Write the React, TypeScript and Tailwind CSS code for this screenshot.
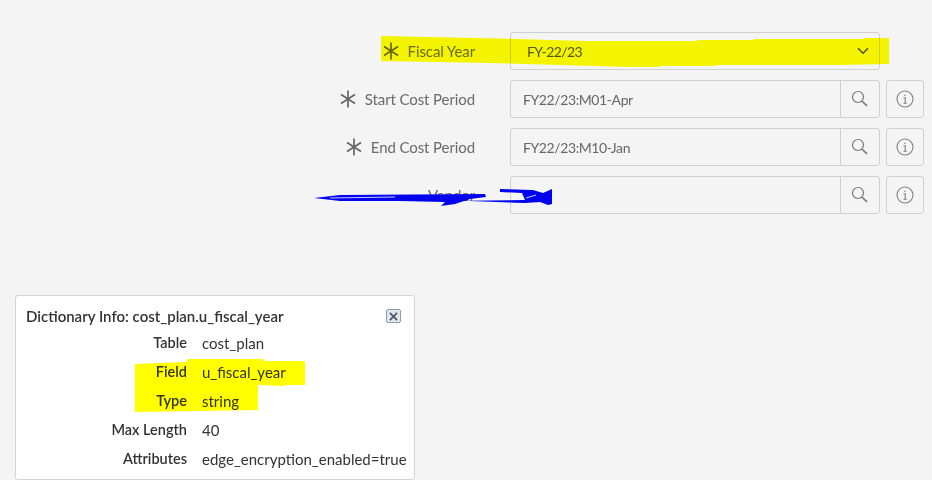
import { ChevronDown } from "lucide-react";

const fields = [
  { label: "Start Cost Period", value: "FY22/23:M01-Apr", required: true },
  { label: "End Cost Period", value: "FY22/23:M10-Jan", required: true },
  { label: "Vendor", value: "", required: false },
];

const dictionary = [
  { name: "Table", value: "cost_plan" },
  { name: "Field", value: "u_fiscal_year" },
  { name: "Type", value: "string" },
  { name: "Max Length", value: "40" },
  { name: "Attributes", value: "edge_encryption_enabled=true" },
];

function RequiredMark() {
  return (
    <svg viewBox="0 0 16 18" className="mr-[9px] h-[18px] w-[16px] text-[#666]" fill="none" stroke="currentColor" strokeWidth="1.7">
      <path d="M8 0.5V17.5M1 4.5L15 13.5M15 4.5L1 13.5" />
    </svg>
  );
}

function SearchIcon() {
  return (
    <svg viewBox="0 0 18 18" className="h-[18px] w-[18px] text-[#777]" fill="none" stroke="currentColor" strokeWidth="1.2">
      <circle cx="7" cy="7" r="5.5" />
      <path d="M10.8 11L16 15.8" strokeWidth="1.7" />
    </svg>
  );
}

function InfoIcon() {
  return (
    <svg viewBox="0 0 18 18" className="h-[18px] w-[18px] text-[#808080]" fill="none" stroke="currentColor" strokeWidth="1.1">
      <circle cx="9" cy="9" r="8" />
      <path d="M7.5 7.8H9.2V13M7.5 13.2H10.8M9 4.4V6" />
    </svg>
  );
}

function Label({ text, required }: { text: string; required: boolean }) {
  return (
    <div className="flex w-[475px] items-center justify-end text-[15px] tracking-[-0.1px] text-[#6b6b6b]">
      {required && <RequiredMark />}
      <span>{text}</span>
    </div>
  );
}

export default function App() {
  return (
    <div className="relative h-[480px] w-[932px] overflow-hidden bg-[#f4f4f4] font-['Lato',sans-serif]">
      <div className="flex flex-col gap-[10px] pt-[32px]">
        <div className="flex h-[38px] items-center">
          <Label text="Fiscal Year" required />
          <div className="ml-[35px] flex h-[38px] w-[370px] items-center justify-between rounded-[3px] border border-[#cfcfcf] pl-[16px] pr-[7px] text-[14px] tracking-[-0.6px] text-[#555]">
            <span>FY-22/23</span>
            <ChevronDown className="h-[18px] w-[18px] text-[#555]" strokeWidth={2.2} />
          </div>
        </div>

        {fields.map((f) => (
          <div key={f.label} className="flex h-[38px] items-center">
            <Label text={f.label} required={f.required} />
            <div className="ml-[35px] flex h-[38px] w-[370px] rounded-[3px] border border-[#cfcfcf]">
              <div className="flex flex-1 items-center pl-[12px] text-[14px] tracking-[-0.4px] text-[#666]">{f.value}</div>
              <div className="flex w-[39px] items-center justify-center border-l border-[#cfcfcf]">
                <SearchIcon />
              </div>
            </div>
            <div className="ml-[6px] flex h-[38px] w-[38px] items-center justify-center rounded-[3px] border border-[#cfcfcf]">
              <InfoIcon />
            </div>
          </div>
        ))}
      </div>

      <div className="absolute left-[15px] top-[295px] h-[185px] w-[400px] rounded-[3px] border border-[#d4d4d4] bg-white text-[#333]">
        <div className="flex items-center justify-between pl-[10px] pr-[13px] pt-[9px]">
          <span className="text-[15px] font-semibold">Dictionary Info: cost_plan.u_fiscal_year</span>
          <span className="flex h-[14px] w-[15px] items-center justify-center rounded-[2px] border border-[#8a9bb0] bg-[#dfe6ec] text-[#556]">
            <svg viewBox="0 0 10 10" className="h-[9px] w-[9px]">
              <path d="M1 1L9 9M9 1L1 9" stroke="currentColor" strokeWidth="2" />
            </svg>
          </span>
        </div>
        <div className="mt-[1px] flex flex-col">
          {dictionary.map((d) => (
            <div key={d.name} className="flex h-[29px] items-center">
              <span className="w-[171px] text-right text-[14.5px] font-semibold">{d.name}</span>
              <span className="ml-[15px] text-[15px]">{d.value}</span>
            </div>
          ))}
        </div>
      </div>

      {/* marker annotations drawn over the screenshot */}
      <svg className="pointer-events-none absolute left-0 top-0 mix-blend-multiply" width="932" height="480">
        <path
          d="M381 36L517 39L585 41L697 41V40L754 40V39L864 39V38L889 38V64L838 65L716 65V66L660 66V67L630 67L490 63L381 61Z"
          fill="#ffff00"
        />
        <path d="M135 364L187 362V359L263 359V361L305 361V385L285 385V386L258 385V410L135 412Z" fill="#ffff00" />
      </svg>
      <svg className="pointer-events-none absolute left-0 top-0" width="932" height="480">
        <path
          d="M314 198L340 195L485 194L486 197L470 199L455 204L441 206L445 202L400 201L340 201ZM445 201L525 200L522 193L500 192V189L533 190L543 193L552 189V204L548 205L540 202L525 203L470 201Z"
          fill="#0000f0"
        />
        <path d="M330 198L395 197" stroke="#c8c8f8" strokeWidth="1" />
        <path d="M526 198L536 195" stroke="#c8c8f8" strokeWidth="1" />
      </svg>
    </div>
  );
}
